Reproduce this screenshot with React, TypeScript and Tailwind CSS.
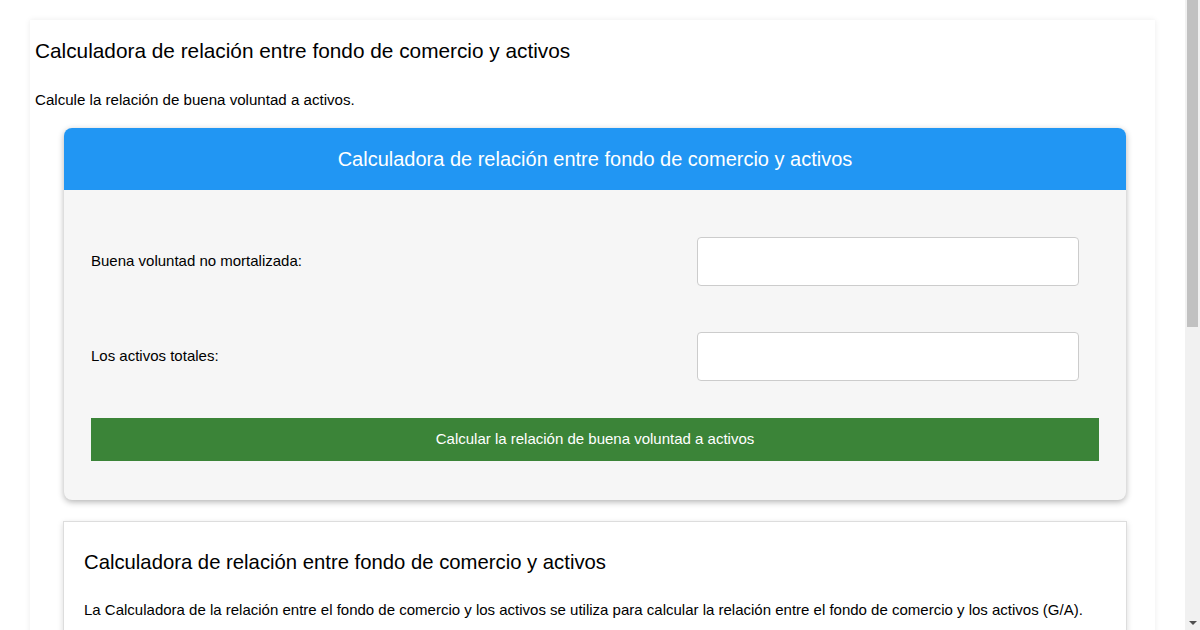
import React from "react";

const font = { fontFamily: '"Liberation Sans", Arial, sans-serif' };

function Field({ label }: { label: string }) {
  return (
    <div className="grid grid-cols-[60%_40%] items-center">
      <label className="text-[15px] text-black">{label}</label>
      <div className="pl-px">
        <input type="text" className="h-[49px] w-[95%] rounded-[4px] border border-[#cccccc] bg-white px-3 text-[15px] outline-none" />
      </div>
    </div>
  );
}

function Scrollbar() {
  return (
    <div className="flex h-[630px] w-[15px] shrink-0 flex-col bg-[#f1f1f1]">
      <div className="mx-auto h-[327px] w-[11px] bg-[#c1c1c1]" />
      <div className="flex-1" />
      <div className="flex h-[15px] items-center justify-center">
        <div className="h-0 w-0 border-l-[4px] border-r-[4px] border-t-[4px] border-l-transparent border-r-transparent border-t-[#505050]" />
      </div>
    </div>
  );
}

export default function App() {
  return (
    <div className="flex h-[630px] overflow-hidden bg-white" style={font}>
      <div className="min-w-0 flex-1 pt-5">
        <div className="mx-[30px] bg-white px-[5px] pb-10 shadow-[0_0_6px_rgba(0,0,0,0.08)]">
          <h1 className="pt-[19px] text-[20.8px] leading-[24px] text-black">Calculadora de relación entre fondo de comercio y activos</h1>
          <p className="mt-[27px] text-[15.1px] leading-[20px] text-black">Calcule la relación de buena voluntad a activos.</p>

          <section className="ml-[29px] mr-[24px] mt-[18px] overflow-hidden rounded-[8px] bg-[#f6f6f6] shadow-[0_2px_6px_rgba(0,0,0,0.3)]">
            <div className="flex h-[62px] items-center justify-center bg-[#2196f3]">
              <h2 className="text-[20px] text-white">Calculadora de relación entre fondo de comercio y activos</h2>
            </div>
            <div className="px-[27px] pb-[39px] pt-[47px]">
              <Field label="Buena voluntad no mortalizada:" />
              <div className="mt-[46px]">
                <Field label="Los activos totales:" />
              </div>
              <button type="button" className="mt-[37px] h-[43px] w-full bg-[#3b8438] text-[15px] text-white">
                Calcular la relación de buena voluntad a activos
              </button>
            </div>
          </section>

          <section className="ml-[28px] mr-[23px] mt-[21px] border border-[#dddddd] bg-white px-5 pb-6 pt-[28px] shadow-[0_2px_6px_rgba(0,0,0,0.15)]">
            <h2 className="text-[20.3px] leading-[24px] text-black">Calculadora de relación entre fondo de comercio y activos</h2>
            <p className="mt-[25px] text-[15px] leading-[22px] text-black">
              La Calculadora de la relación entre el fondo de comercio y los activos se utiliza para calcular la relación entre el fondo de comercio y los activos (G/A).
            </p>
          </section>
        </div>
      </div>
      <Scrollbar />
    </div>
  );
}
